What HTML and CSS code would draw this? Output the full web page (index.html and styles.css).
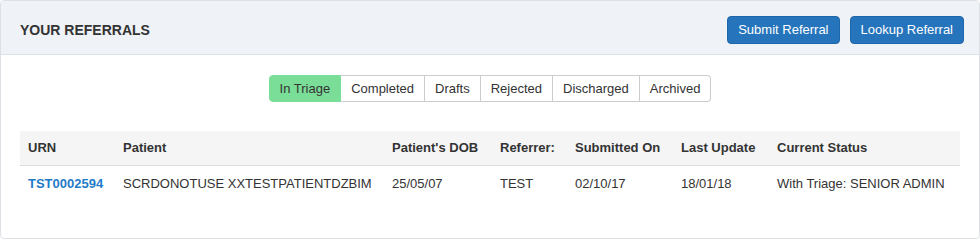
FILE: index.html
```html
<!DOCTYPE html>
<html lang="en">
<head>
   <meta charset="UTF-8">
   <title>Your Referrals</title>
   <link rel="stylesheet" href="styles.css">
</head>
<body>

<div class="panel">
   <div class="panel-heading">
      <h2 class="panel-title">YOUR REFERRALS</h2>
      <div class="actions">
         <button class="btn">Submit Referral</button>
         <button class="btn">Lookup Referral</button>
      </div>
   </div>

   <div class="panel-body">
      <ul class="tab-list">
         <li class="tab-item is-active">In Triage</li>
         <li class="tab-item">Completed</li>
         <li class="tab-item">Drafts</li>
         <li class="tab-item">Rejected</li>
         <li class="tab-item">Discharged</li>
         <li class="tab-item">Archived</li>
      </ul>

      <table class="table">
         <thead>
            <tr>
               <th class="col-urn">URN</th>
               <th class="col-patient">Patient</th>
               <th class="col-dob">Patient's DOB</th>
               <th class="col-ref">Referrer:</th>
               <th class="col-sub">Submitted On</th>
               <th class="col-upd">Last Update</th>
               <th>Current Status</th>
            </tr>
         </thead>
         <tbody>
            <tr>
               <td><a class="link" href="#">TST0002594</a></td>
               <td>SCRDONOTUSE XXTESTPATIENTDZBIM</td>
               <td>25/05/07</td>
               <td>TEST</td>
               <td>02/10/17</td>
               <td>18/01/18</td>
               <td>With Triage: SENIOR ADMIN</td>
            </tr>
         </tbody>
      </table>
   </div>
</div>

</body>
</html>
```

FILE: styles.css
```css
*,
::before,
::after {
    padding: 0;
    margin: 0;
    box-sizing: border-box;
}

html,
body {
    font-family: "Liberation Sans", Arial, sans-serif;
    font-size: 13px;
    color: #333;
    background-color: #fff;
}

li {
    list-style-type: none;
}

.panel {
    width: 980px;
    height: 239px;
    border: 1px solid #dde1e6;
    border-radius: 4px;
}

.panel-heading {
    height: 54px;
    display: flex;
    align-items: center;
    justify-content: space-between;
    padding: 4px 15px 0 19px;
    background: #eff2f7;
    border-bottom: 1px solid #dde1e6;
    border-radius: 4px 4px 0 0;
}

.panel-title {
    font-size: 14px;
    font-weight: bold;
    color: #333;
}

.actions {
    display: flex;
    gap: 10px;
}

.btn {
    height: 28px;
    padding: 0 10px;
    font-family: inherit;
    font-size: 13px;
    color: #fff;
    background: #2574bc;
    border: 1px solid #1f67a9;
    border-radius: 4px;
}

/* tabs */
.panel-body {
    padding: 20px 19px 0 19px;
}

.tab-list {
    display: flex;
    justify-content: center;
    margin-bottom: 29px;
}

.tab-item {
    height: 27px;
    line-height: 25px;
    padding: 0 10px;
    border: 1px solid #ccc;
    border-left: none;
    background: #fff;
}

.tab-item:first-child {
    border-left: 1px solid #ccc;
    border-radius: 4px 0 0 4px;
}

.tab-item:last-child {
    border-radius: 0 4px 4px 0;
}

.tab-item.is-active {
    background: #7ade98;
    border-color: #7ade98;
}

/* table */
.table {
    width: 940px;
    border-collapse: collapse;
}

.table th {
    height: 34px;
    padding: 0 8px;
    text-align: left;
    font-weight: bold;
    background: #f5f5f5;
    border-bottom: 1px solid #ddd;
}

.table td {
    height: 36px;
    padding: 0 8px;
}

.col-urn { width: 95px; }
.col-patient { width: 269px; }
.col-dob { width: 108px; }
.col-ref { width: 75px; }
.col-sub { width: 106px; }
.col-upd { width: 96px; }

.link {
    color: #1f7bc8;
    font-weight: bold;
    text-decoration: none;
}
```
